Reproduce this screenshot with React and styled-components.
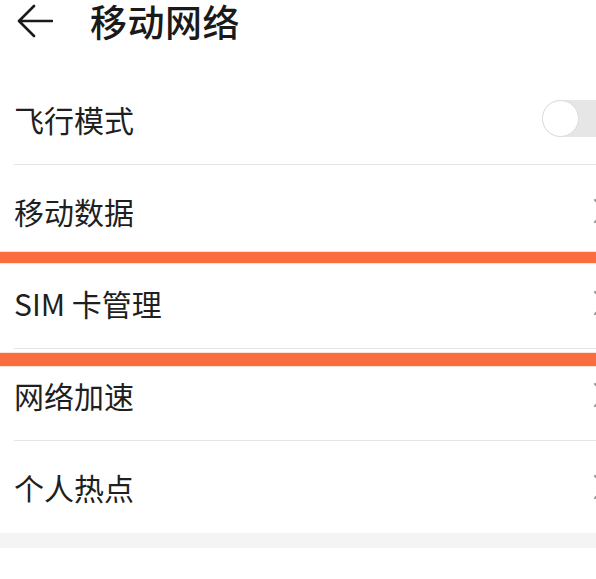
import React from "react";
import styled, { createGlobalStyle } from "styled-components";

const GlobalStyle = createGlobalStyle`
  html, body {
    margin: 0;
    padding: 0;
    background: #ffffff;
    overflow: hidden;
  }
  body {
    font-family: "Noto Sans CJK SC", "Noto Sans", sans-serif;
    color: #1f1f1f;
  }
`;

const StyledPage = styled.div`
  width: 596px;
  height: 579px;
  overflow: hidden;
  background: #ffffff;
`;

const StyledHeader = styled.header`
  display: flex;
  align-items: center;
  height: 42px;
  margin-bottom: 31px;
`;

const StyledBack = styled.button`
  display: flex;
  align-items: center;
  justify-content: center;
  width: 36px;
  height: 36px;
  margin-left: 17px;
  margin-right: 37px;
  padding: 0;
  border: none;
  background: none;
`;

const StyledTitle = styled.h1`
  margin: 0;
  font-size: 37px;
  font-weight: 500;
  color: #1a1a1a;
  letter-spacing: 0.5px;
  line-height: 42px;
`;

const StyledList = styled.div`
  position: relative;
`;

const StyledRow = styled.div`
  display: flex;
  align-items: center;
  justify-content: space-between;
  box-sizing: border-box;
  height: 92px;
  margin-left: 14px;
  border-bottom: ${({ last }) => (last ? "none" : "1px solid #e4e4e4")};
`;

const StyledLabel = styled.span`
  font-size: 30px;
  font-weight: 400;
  color: #1f1f1f;
  line-height: 40px;
`;

const StyledChevron = styled.svg`
  flex-shrink: 0;
  margin-right: -12px;
`;

const StyledToggle = styled.div`
  position: relative;
  flex-shrink: 0;
  width: 72px;
  height: 37px;
  margin-right: -18px;
  border-radius: 19px;
  background: #e6e6e6;
`;

const StyledKnob = styled.div`
  position: absolute;
  top: 0;
  left: 0;
  box-sizing: border-box;
  width: 37px;
  height: 37px;
  border-radius: 50%;
  background: #ffffff;
  border: 1.5px solid #dcdcdc;
`;

const StyledHighlight = styled.div`
  position: absolute;
  left: 0;
  right: 0;
  top: ${({ top }) => top}px;
  height: ${({ size }) => size}px;
  background: #fa6d3e;
  box-shadow: 0 0 0 1px #fde2d4;
`;

const StyledFooter = styled.div`
  height: 15px;
  background: #f4f4f4;
`;

const Chevron = () => (
  <StyledChevron width="15" height="26" viewBox="0 0 15 26">
    <path d="M2 2 L13 13 L2 24" fill="none" stroke="#9a9a9a" strokeWidth="2.2" strokeLinecap="round" strokeLinejoin="round" />
  </StyledChevron>
);

const rows = [
  { label: "移动数据" },
  { label: "SIM 卡管理" },
  { label: "网络加速" },
  { label: "个人热点", last: true },
];

const App = () => (
  <StyledPage>
    <GlobalStyle />
    <StyledHeader>
      <StyledBack aria-label="返回">
        <svg width="36" height="34" viewBox="0 0 36 34">
          <path d="M35 17 H3 M17 2 L2 17 L17 32" fill="none" stroke="#1a1a1a" strokeWidth="2.6" strokeLinecap="round" strokeLinejoin="round" />
        </svg>
      </StyledBack>
      <StyledTitle>移动网络</StyledTitle>
    </StyledHeader>
    <StyledList>
      <StyledRow>
        <StyledLabel>飞行模式</StyledLabel>
        <StyledToggle>
          <StyledKnob />
        </StyledToggle>
      </StyledRow>
      {rows.map((row) => (
        <StyledRow key={row.label} last={row.last}>
          <StyledLabel>{row.label}</StyledLabel>
          <Chevron />
        </StyledRow>
      ))}
      <StyledHighlight top={179} size={11} />
      <StyledHighlight top={280} size={13} />
    </StyledList>
    <StyledFooter />
  </StyledPage>
);

export default App;
